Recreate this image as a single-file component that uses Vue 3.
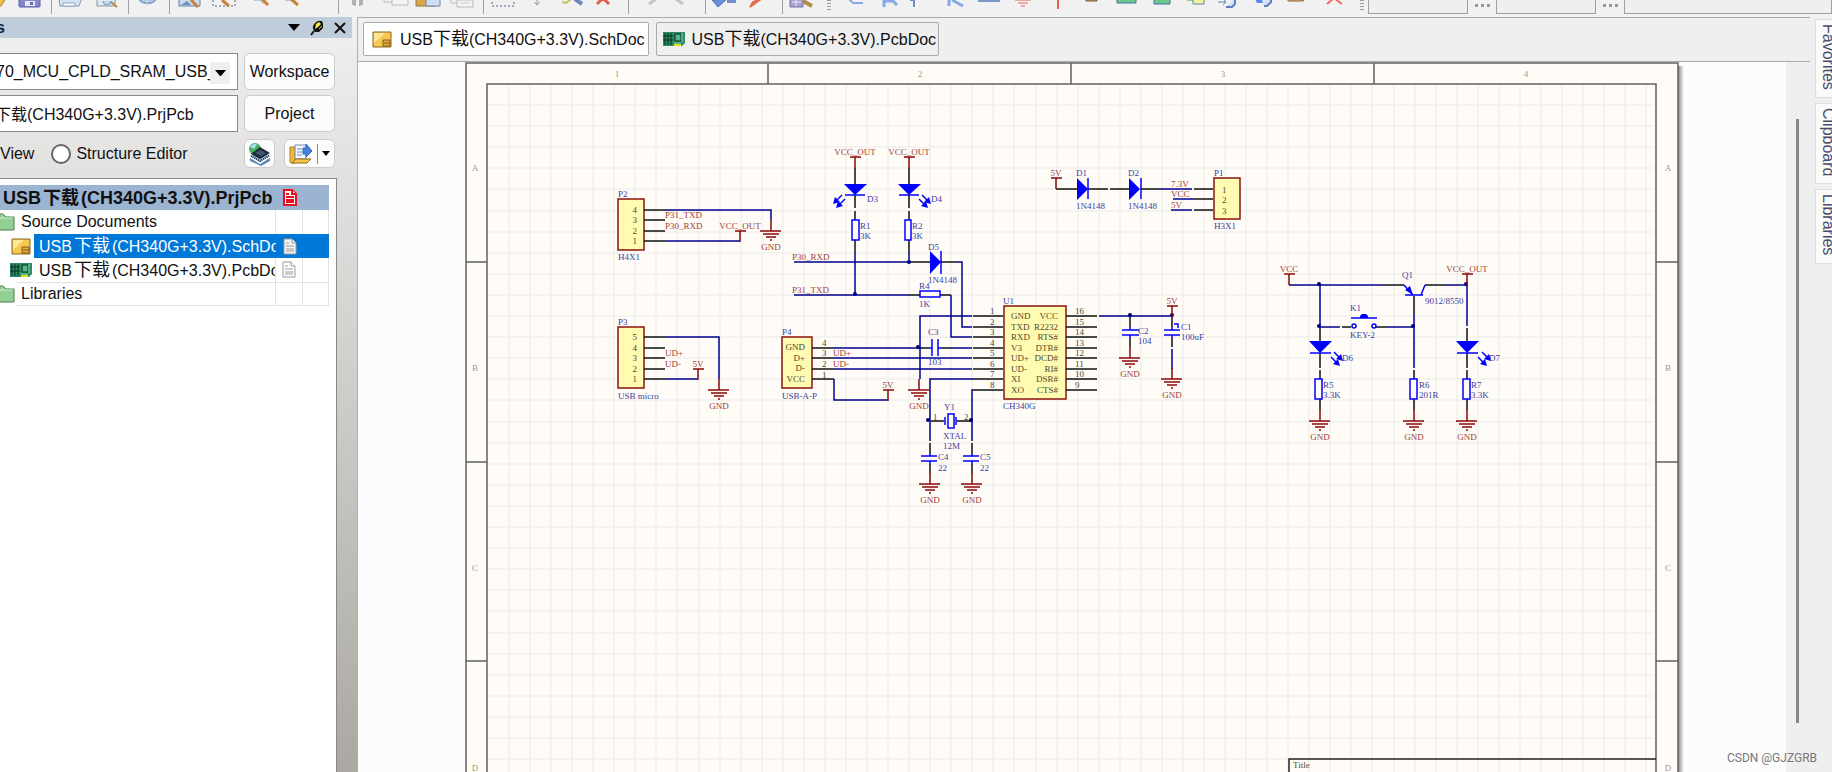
<script setup>
import { ref } from 'vue'

const workspace = ref('70_MCU_CPLD_SRAM_USB_')
const project = ref('下载(CH340G+3.3V).PrjPcb')
const view = ref('')

/* Toolbar: [start, type, shapes]; a slot reaches to the start of the next one. */
const slots = [
  [0, 'tool', 'Open', [['M-4 6H1L6-2H-2z', '#f0c050', '#b08020']]],
  [14, 'tool', 'Save', [['M19-2H40V6Q40 7 39 7H20Q19 7 19 6z', '#8486cc', '#5a5ca8'], ['M25 1H35V6H25z', '#e6e6f4', ''], ['M30 2H33V5H30z', '#6a6ab0', '']]],
  [51, 'sep'],
  [53, 'tool', 'Print', [['M59-2H82L79 6H60z', '#d6e4f2', '#7c98b8'], ['M63 3H75V6H63z', '#fff', '#8aa4c0']]],
  [92, 'tool', 'Preview', [['M97-2H115V6H97z', '#dfe9f2', '#8296aa'], ['M103 1a4 4 0 1 0 8 0', '#c0d8ea', '#8098b0'], ['M111 2L117 7', '', '#c08040', 2]]],
  [128, 'sep'],
  [130, 'tool', 'Browser', [['M138-2A10 8 0 0 0 157-2z', '#8caed6', '#6a8ab4'], ['M142 1H153M147-2V6', '', '#d5e4f4']]],
  [169, 'sep'],
  [171, 'tool', 'Fit document', [['M179-2H200V6H179z', '#c8dcee', '#5c80a8'], ['M181 5L187 1L191 5z', '#6c8fb8', ''], ['M191 0L198 7', '', '#c8803c', 3]]],
  [208, 'tool', 'Fit area', [['M213 0V6H235V0', '', '#50688c', 1, '2 2'], ['M222 0L229 6', '', '#c8803c', 3]]],
  [246, 'tool', 'Zoom in', [['M254 0H260L264 3', '', '#b8c8d8', 2], ['M262-1L268 5', '', '#c8803c', 3]]],
  [280, 'tool', 'Zoom out', [['M285 0H291L294 2', '', '#b8c8d8', 2], ['M291-1L298 5', '', '#c8803c', 3]]],
  [338, 'sep'],
  [340, 'tool', 'Cut', [['M353 0V5M362 0V5M355 0V6M360 0V6', '', '#b0b0b0', 2]]],
  [376, 'tool', 'Copy', [['M384-2H396V2H384z', '#f2f2f2', '#bbb'], ['M392-2H408V5H392z', '#f2f2f2', '#bbb']]],
  [411, 'tool', 'Paste', [['M416-2H436V6H416z', '#d8a850', '#9a7430'], ['M426-1H440V6H426z', '#cfe0f2', '#6c88a8']]],
  [445, 'tool', 'Stamp', [['M451-2H466V3H451z', '#f2f2f2', '#bbb'], ['M457 0H473V7H457z', '#f2f2f2', '#bbb'], ['M460 3H470', '', '#ccc']]],
  [483, 'sep'],
  [485, 'tool', 'Select', [['M492-2V6H514V-2', '', '#50688c', 1, '2 2']]],
  [524, 'tool', 'Move', [['M537-2V4M534 2L537 5L540 2', '', '#999']]],
  [554, 'tool', 'Deselect', [['M562 2L566 3L571-1', '', '#c8c060', 2], ['M575-1L582 4', '', '#6c88b8', 4]]],
  [592, 'tool', 'Clear filter', [['M597 4L603-2L609 4', '', '#e0604c', 3]]],
  [628, 'sep'],
  [630, 'tool', 'Undo', [['M649 4L656-1', '', '#c4c4c4', 3]]],
  [667, 'tool', 'Redo', [['M676-1L683 4', '', '#c4c4c4', 3]]],
  [705, 'sep'],
  [707, 'tool', 'Cross probe', [['M712 0L718 7L727-1z', '#6890d8', '#4a70b8'], ['M727-2H736V3H727z', '#7090c8', '']]],
  [742, 'tool', 'Edit', [['M750 7L753 2L761-1z', '#e07050', '#e07050', 2]]],
  [782, 'sep'],
  [784, 'tool', 'Inspect', [['M790-2H803V7H790z', '#a8a0d8', '#7870a8'], ['M792 2H801M796-1V6', '', '#eee'], ['M803 1L812 6', '', '#b08c48', 4]]],
  [826, 'grip'],
  [834, 'tool', 'Wire', [['M849-1L853 3H863', '', '#86a8e8', 2]]],
  [876, 'tool', 'Bus', [['M884-2V7M885 1H893L897 5', '', '#86a8e8', 3]]],
  [904, 'tool', 'Harness', [['M910 0H914V7', '', '#6a90c0', 2]]],
  [936, 'tool', 'Bus entry', [['M949-1V6M952 0L963 6', '', '#86a8e8', 3]]],
  [972, 'tool', 'Net label', [['M978 1H1000', '', '#7c98c8', 2]]],
  [1008, 'tool', 'GND port', [['M1015 0H1031M1018 3H1028M1021 6H1025', '', '#e8604c', 1]]],
  [1044, 'tool', 'VCC port', [['M1058-2V9', '', '#e8604c', 2]]],
  [1076, 'tool', 'Part', [['M1086-2H1097V1H1086z', '#b89458', '#786038']]],
  [1108, 'tool', 'Sheet', [['M1117-2H1136V3H1117z', '#6cc888', '#4470a8']]],
  [1146, 'tool', 'Sheet entry', [['M1154-2H1170V4H1154z', '#6cc888', '#4470a8'], ['M1160-1H1167', '', '#4470a8', 2]]],
  [1180, 'tool', 'Device sheet', [['M1187-2H1196V1H1187z', '#90d080', ''], ['M1193-2H1204V4H1193z', '#f2f4a0', '#5c88a8']]],
  [1212, 'tool', 'Harness connector', [['M1218 2H1226M1223-1L1226 2L1223 5', '', '#5c88b8'], ['M1226 7H1232L1235 4V-2', '#d4e2f8', '#5c80c0', 2]]],
  [1246, 'tool', 'Harness entry', [['M1255-1H1263V3H1257z', '#5888e8', ''], ['M1261-2H1271V2L1267 6H1264', '#d4e2f8', '#5c80c0', 2]]],
  [1280, 'tool', 'Port', [['M1288-2H1306L1303 1H1288z', '#d8b070', '#886838']]],
  [1316, 'tool', 'No ERC', [['M1327 4L1334-2L1342 4', '', '#f06c5c', 2]]],
  [1359, 'grip'],
  [1368, 'end'],
]
const tools = slots.slice(0, -1).map((s, i) => ({ x: s[0], w: slots[i + 1][0] - s[0], type: s[1], name: s[2], shapes: s[3] }))

const rows = Array.from({ length: 32 }, (_, i) => Math.round(105 + i * 21.1))
const cols = Array.from({ length: 55 }, (_, i) => Math.round(509 + i * 21.06))

const black = `M644 210H665M644 220H665M644 231H665M644 241H665
M644 337H665M644 348H665M644 358H665M644 369H665M644 379H665
M812 348H834M812 358H834M812 369H834M812 379H834
M855 168V184M855 195V208M855 211V220M855 240V252
M909 168V184M909 195V208M909 211V220M909 240V252
M908 262H930M941 262H955M910 295H920M940 295H951M920 348H929M941 348H951
M973 316H1003M973 327H1003M973 337H1003M973 348H1003M973 358H1003M973 369H1003M973 379H1003M973 390H1003
M1066 316H1097M1066 327H1097M1066 337H1097M1066 348H1097M1066 358H1097M1066 369H1097M1066 379H1097M1066 390H1097
M1130 317V327M1130 338V347M1172 317V327M1172 338V347
M931 421H944M957 421H971M930 443V453M930 464V473M972 443V453M972 464V473
M1056 189H1077M1088 189H1108M1110 189H1129M1141 189H1160M1194 189H1213M1193 199H1213M1194 210H1213
M1384 285H1404M1425 285H1446M1320 327V341M1320 353V368M1320 370V379M1320 399V410
M1467 328V341M1467 353V368M1467 370V379M1467 399V410M1414 296V314M1414 370V379M1414 399V410
M1342 327H1351M1376 327H1387`
const wires = `M665 210H771V220M665 241H740M665 337H719V379M665 379H698
M834 348H920M834 358H972M834 369H972M834 379V400H888
M855 252V295M909 252V262M794 262H908M794 295H910M955 262H962V327H972M951 295V337H972M951 348H972
M972 316H920V379M973 379H930V441M973 390H972V441M1099 316H1172M1172 349V369
M1160 189H1192M1173 199H1193M1171 210H1192
M1289 285H1384M1446 285H1467V326M1320 285V327H1340M1387 327H1414M1414 314V368`
const symbols = `M845 195H865M899 195H919M941 251V274M1088 178V199M1141 178V199
M1310 353H1331M1457 353H1478
M932 339V356M938 339V356M929 348H932M938 348H941
M1122 330H1139M1122 335H1139M1130 327V330M1130 335V338
M1164 330H1180M1164 335H1180M1172 327V330M1172 335V338M1174 324H1178V328
M921 456H937M921 461H937M930 453V456M930 461V464
M963 456H979M963 461H979M972 453V456M972 461V464
M945 417V425M956 417V425M1351 318H1377M1405 295H1423M1404 285L1413 295M1421 295L1425 285`
const solids = `M844 184H867L855 195zM898 184H921L909 195zM930 251V274L941 262z
M1077 178V200L1088 189zM1129 178V200L1140 189zM1309 341H1332L1320 353zM1456 341H1479L1467 353z
M1360 318V316L1362 314H1366L1368 316V318zM1413 295L1405 290L1410 286z`
const resistors = [[852, 220, 7, 20], [905, 220, 6, 20], [920, 291, 20, 6], [948, 414, 6, 14], [1315, 379, 7, 20], [1410, 379, 7, 20], [1463, 379, 7, 20]]
const arrows = [[842, 195, -1], [845, 199, -1], [922, 195, 1], [919, 199, 1], [1334, 352, 1], [1331, 357, 1], [1482, 352, 1], [1478, 357, 1]]
const boxes = [[618, 199, 26, 51], [618, 327, 26, 61], [782, 337, 30, 51], [1004, 306, 62, 93], [1214, 178, 26, 41]]
const dots = [[855, 294], [909, 262], [918, 347], [928, 420], [971, 420], [1130, 315], [1172, 315], [1319, 284], [1319, 326], [1413, 326], [1466, 284]]
/* [x, y of the first bar] */
const grounds = [[771, 231], [719, 390], [919, 390], [1130, 358], [1172, 379], [930, 484], [972, 484], [1320, 421], [1414, 421], [1467, 421]]
const supplies = [['VCC_OUT', 740, 231], ['5V', 698, 369], ['5V', 888, 390], ['VCC_OUT', 855, 157], ['VCC_OUT', 909, 157], ['5V', 1172, 306], ['5V', 1056, 178], ['VCC', 1289, 274], ['VCC_OUT', 1467, 274]]
const parts = [
  ['P2', 618, 194], ['H4X1', 618, 257], ['P3', 618, 322], ['USB micro', 618, 396], ['P4', 782, 332], ['USB-A-P', 782, 396],
  ['D3', 867, 199], ['R1', 860, 226], ['3K', 860, 236], ['D4', 931, 199], ['R2', 912, 226], ['3K', 912, 236],
  ['D5', 928, 247], ['1N4148', 928, 280], ['R4', 919, 286], ['1K', 919, 304], ['C3', 928, 332], ['103', 928, 362],
  ['U1', 1003, 301], ['CH340G', 1003, 406], ['C2', 1138, 331], ['104', 1138, 341], ['C1', 1181, 327], ['100uF', 1181, 337],
  ['Y1', 944, 407], ['XTAL', 943, 436], ['12M', 943, 446], ['C4', 938, 457], ['22', 938, 468], ['C5', 980, 457], ['22', 980, 468],
  ['D1', 1076, 173], ['1N4148', 1076, 206], ['D2', 1128, 173], ['1N4148', 1128, 206], ['P1', 1214, 173], ['H3X1', 1214, 226],
  ['Q1', 1402, 275], ['9012/8550', 1425, 301], ['K1', 1350, 308], ['KEY-2', 1350, 335], ['D6', 1342, 358], ['D7', 1489, 358],
  ['R5', 1323, 385], ['3.3K', 1323, 395], ['R6', 1419, 385], ['201R', 1419, 395], ['R7', 1471, 385], ['3.3K', 1471, 395],
]
const nets = [
  ['P31_TXD', 665, 215], ['P30_RXD', 665, 226], ['UD+', 665, 353], ['UD-', 665, 364], ['UD+', 833, 353], ['UD-', 833, 364],
  ['P30_RXD', 792, 257], ['P31_TXD', 792, 290], ['7.3V', 1171, 184], ['VCC', 1171, 194], ['5V', 1171, 205],
]
const yPins = [316, 327, 337, 348, 358, 369, 379, 390]
const pins = [
  ...[4, 3, 2, 1].map((n, i) => [n, 637, [210, 220, 231, 241][i], 'end']),
  ...[5, 4, 3, 2, 1].map((n, i) => [n, 637, [337, 348, 358, 369, 379][i], 'end']),
  ...['GND', 'D+', 'D-', 'VCC'].map((n, i) => [n, 805, [347, 358, 368, 379][i], 'end']),
  ...[4, 3, 2, 1].map((n, i) => [n, 822, [343, 353, 364, 375][i], 'start']),
  ...['GND', 'TXD', 'RXD', 'V3', 'UD+', 'UD-', 'XI', 'XO'].map((n, i) => [n, 1011, yPins[i], 'start']),
  ...['VCC', 'R2232', 'RTS#', 'DTR#', 'DCD#', 'RI#', 'DSR#', 'CTS#'].map((n, i) => [n, 1058, yPins[i], 'end']),
  ...yPins.map((y, i) => [i + 1, 990, y - 5, 'start']),
  ...yPins.map((y, i) => [16 - i, 1075, y - 5, 'start']),
  [1, 1222, 190, 'start'], [2, 1222, 200, 'start'], [3, 1222, 211, 'start'], [1, 933, 417, 'start'], [2, 964, 417, 'start'],
]
</script>

<template>
  <div class="app">
    <header class="toolbar">
      <template v-for="t in tools" :key="t.x">
        <button v-if="t.type === 'tool'" class="tool" :aria-label="t.name" :style="{ width: t.w + 'px' }">
          <svg :width="t.w" height="14" :viewBox="`${t.x} 0 ${t.w} 14`">
            <path v-for="(p, i) in t.shapes" :key="i" :d="p[0]" :fill="p[1] || 'none'" :stroke="p[2] || 'none'" :stroke-width="p[3] || 1" :stroke-dasharray="p[4]" />
          </svg>
        </button>
        <span v-else :class="t.type" :style="{ width: t.w + 'px' }"></span>
      </template>
      <input class="field" aria-label="Filter" />
      <button class="more" aria-label="Choose filter"><i></i><i></i><i></i></button>
      <input class="field" aria-label="Mask" />
      <button class="more" aria-label="Choose mask"><i></i><i></i><i></i></button>
      <input class="field wide" aria-label="Location" />
    </header>

    <div class="body">
      <aside class="panel">
        <div class="title">
          <b>s</b>
          <button aria-label="Menu"><svg width="12" height="7" viewBox="0 0 12 7"><path d="M0 0H12L6 7z" /></svg></button>
          <button aria-label="Pin">
            <svg width="14" height="16" viewBox="0 0 14 16">
              <path d="M5 3L8 1H12L13 4V8L9 12H5L3 9V6z" fill="#111" /><path d="M6 4L9 2L11 4L8 7L5 9z" fill="#f4ec50" /><path d="M9 9L12 6" stroke="#d8d050" /><path d="M4 11L1 15" stroke="#111" stroke-width="2" />
            </svg>
          </button>
          <button aria-label="Close"><svg width="12" height="12" viewBox="0 0 12 12"><path d="M1 1L11 11M11 1L1 11" stroke="#111" stroke-width="2" /></svg></button>
        </div>

        <div class="controls">
          <div class="combo">
            <select v-model="workspace" aria-label="Workspace"><option>70_MCU_CPLD_SRAM_USB_</option></select>
            <span class="drop"><svg width="11" height="6" viewBox="0 0 11 6"><path d="M0 0H11L6 6H5z" /></svg></span>
          </div>
          <button class="btn">Workspace</button>
          <input v-model="project" class="box" aria-label="Project" />
          <button class="btn">Project</button>
        </div>

        <div class="modes">
          <span>View</span>
          <label><input v-model="view" type="radio" value="structure" /> Structure Editor</label>
          <button class="btn small" aria-label="Compile">
            <svg width="24" height="24" viewBox="0 0 24 24">
              <path d="M2 16L12 22L22 16V19L13 24L2 19z" fill="#5c88b8" /><path d="M2 14L12 20L22 14L13 9z" fill="#a8c8e8" />
              <circle cx="7" cy="7" r="6" fill="#48b060" /><path d="M2 5Q5 1 9 2L6 7z" fill="#a8e0f0" />
              <path d="M3 12L12 17L22 11L12 5z" fill="#1c2c3c" /><path d="M7 11L13 14L18 11L12 8z" fill="#44586c" />
              <path d="M3 14L12 19L22 13" fill="none" stroke="#182838" stroke-dasharray="1 1" stroke-width="2" />
            </svg>
          </button>
          <button class="btn split" aria-label="Open documents">
            <svg width="24" height="24" viewBox="0 0 24 24">
              <path d="M1 5H5L6 8V21H2L1 20z" fill="#f0b838" stroke="#b08020" /><path d="M6 3H17V17H6z" fill="#f6faff" stroke="#7088b0" />
              <path d="M8 7H13M8 10H13M8 13H13" stroke="#6888c8" /><path d="M14 6H17V2L23 9L17 15V12H14z" fill="#4880e0" stroke="#3464b8" />
              <path d="M3 21L7 17H22L18 21z" fill="#f8c848" stroke="#906818" />
            </svg>
            <i></i>
            <svg width="8" height="5" viewBox="0 0 8 5"><path d="M0 0H8L4 5z" /></svg>
          </button>
        </div>

        <ul class="tree">
          <li class="row root">
            <span class="name">USB<span class="cjk">下载</span>(CH340G+3.3V).PrjPcb</span>
            <svg class="page red" width="14" height="17" viewBox="0 0 14 17"><path d="M1 1H9L13 5V16H1z" /><path d="M9 1V5H13M3 5H6M3 8H11M3 11H11M3 13H11" /></svg>
          </li>
          <li class="row">
            <svg class="folder" width="15" height="18" viewBox="0 0 15 18"><path d="M-3 17V1H3L6 4H14V17z" fill="#94cf94" stroke="#4c7c50" /><path d="M0 5H13" stroke="#d0f0d0" /></svg>
            <span class="name">Source Documents</span><span class="cell"></span><span class="cell"></span>
          </li>
          <li class="row file selected">
            <svg width="20" height="17" viewBox="0 0 20 17"><path d="M1 1H19V16H1z" fill="#f6c850" stroke="#8a6420" /><path d="M2 2H13L2 12z" fill="#fbe795" /><path d="M11 9H18V15H11z" fill="#e8b040" stroke="#7c5818" /><path d="M12 12H18" stroke="#7c5818" /></svg>
            <span class="name">USB<span class="cjk">下载</span>(CH340G+3.3V).SchDoc</span>
            <svg class="page" width="14" height="17" viewBox="0 0 14 17"><path d="M1 1H9L13 5V16H1z" /><path d="M9 1V5H13M3 5H6M3 8H11M3 11H11M3 13H11" /></svg>
          </li>
          <li class="row file">
            <svg width="22" height="17" viewBox="0 0 22 17"><path d="M0 1H22V12L19 15H0z" fill="#2c8c64" /><path d="M2 2V14M5 2V14M8 2V14M0 5H10M0 9H10" stroke="#083020" /><path d="M12 3H18V10H12z" fill="#58b48c" stroke="#082c20" /><path d="M19 2V11M11 12H18" stroke="#8cd8a8" /><path d="M11 14H18" stroke="#d8e020" stroke-width="2" /></svg>
            <span class="name">USB<span class="cjk">下载</span>(CH340G+3.3V).PcbDoc</span><span class="cell shift"><svg class="page" width="14" height="17" viewBox="0 0 14 17"><path d="M1 1H9L13 5V16H1z" /><path d="M9 1V5H13M3 5H6M3 8H11M3 11H11M3 13H11" /></svg></span><span class="cell"></span>
          </li>
          <li class="row lined">
            <svg class="folder" width="15" height="18" viewBox="0 0 15 18"><path d="M-3 17V1H3L6 4H14V17z" fill="#94cf94" stroke="#4c7c50" /><path d="M0 5H13" stroke="#d0f0d0" /></svg>
            <span class="name">Libraries</span><span class="cell"></span><span class="cell"></span>
          </li>
        </ul>
      </aside>

      <main class="docs">
        <nav class="tabs">
          <button class="tab active">
            <svg width="20" height="17" viewBox="0 0 20 17"><path d="M1 1H19V16H1z" fill="#f6c850" stroke="#8a6420" /><path d="M2 2H13L2 12z" fill="#fbe795" /><path d="M11 9H18V15H11z" fill="#e8b040" stroke="#7c5818" /><path d="M12 12H18" stroke="#7c5818" /></svg>
            <span>USB<span class="cjk">下载</span>(CH340G+3.3V).SchDoc</span>
          </button>
          <button class="tab">
            <svg width="22" height="17" viewBox="0 0 22 17"><path d="M0 1H22V12L19 15H0z" fill="#2c8c64" /><path d="M2 2V14M5 2V14M8 2V14M0 5H10M0 9H10" stroke="#083020" /><path d="M12 3H18V10H12z" fill="#58b48c" stroke="#082c20" /><path d="M19 2V11M11 12H18" stroke="#8cd8a8" /><path d="M11 14H18" stroke="#d8e020" stroke-width="2" /></svg>
            <span>USB<span class="cjk">下载</span>(CH340G+3.3V).PcbDoc</span>
          </button>
        </nav>
        <div class="view">
          <div class="canvas">
            <svg class="sheet" width="1428" height="710" viewBox="358 62 1428 710">
              <defs>
                <linearGradient id="fade"><stop offset="0" stop-color="#888" /><stop offset="1" stop-color="#fcfcfc" /></linearGradient>
                <g id="gnd"><path d="M0-11V0M-11 0H10M-8 3H8M-5 6H5M-1 9H1" /></g>
              </defs>
              <rect x="1678" y="66" width="6" height="710" fill="url(#fade)" />
              <rect x="466" y="63" width="1212" height="720" fill="#fffcf7" />
              <g class="grid">
                <path v-for="y in rows" :key="'r' + y" :d="`M487 ${y}H1653`" />
                <path v-for="x in cols" :key="'c' + x" :d="`M${x} 84V772`" />
              </g>
              <g class="frame">
                <path d="M466 790V63H1678V790M487 790V84H1656V790M768 63V84M1071 63V84M1374 63V84M466 262H487M466 462H487M466 661H487M1656 262H1678M1656 462H1678M1656 661H1678" />
              </g>
              <g class="zone">
                <text v-for="n in 4" :key="n" :x="314 + n * 303" y="77">{{ n }}</text>
                <template v-for="(c, i) in 'ABCD'" :key="c">
                  <text x="475" :y="171 + i * 200">{{ c }}</text><text x="1668" :y="171 + i * 200">{{ c }}</text>
                </template>
              </g>
              <path d="M1289 790V759H1656" class="block" />
              <text x="1293" y="768" class="pin">Title</text>

              <rect v-for="(b, i) in boxes" :key="'b' + i" class="chip" :x="b[0]" :y="b[1]" :width="b[2]" :height="b[3]" />
              <path :d="black" class="lead" />
              <path :d="wires" class="wire" />
              <path :d="symbols" class="symbol" />
              <path :d="solids" class="solid" />
              <rect v-for="(r, i) in resistors" :key="'z' + i" class="resistor" :x="r[0]" :y="r[1]" :width="r[2]" :height="r[3]" />
              <circle cx="1354" cy="326" r="2" class="resistor" /><circle cx="1374" cy="326" r="2" class="resistor" />
              <g v-for="(a, i) in arrows" :key="'a' + i" :transform="`translate(${a[0]} ${a[1]}) scale(${a[2]} 1)`">
                <path d="M0 0L6 6" class="symbol" /><path d="M9 9L2 7L7 2z" class="solid" />
              </g>
              <circle v-for="(d, i) in dots" :key="'d' + i" :cx="d[0]" :cy="d[1]" r="2" fill="#000080" />
              <g v-for="(g, i) in grounds" :key="'g' + i">
                <use href="#gnd" class="power" :x="g[0]" :y="g[1]" />
                <text class="net mid" :x="g[0]" :y="g[1] + 19">GND</text>
              </g>
              <g v-for="(s, i) in supplies" :key="'s' + i">
                <path class="power" :d="`M${s[1] - 5} ${s[2]}h11M${s[1]} ${s[2]}v11`" />
                <text class="net mid" :x="s[1]" :y="s[2] - 2">{{ s[0] }}</text>
              </g>
              <text v-for="(t, i) in nets" :key="'n' + i" class="net" :x="t[1]" :y="t[2] + 3">{{ t[0] }}</text>
              <text v-for="(t, i) in parts" :key="'p' + i" class="part" :x="t[1]" :y="t[2] + 3">{{ t[0] }}</text>
              <text v-for="(t, i) in pins" :key="'i' + i" class="pin" :x="t[1]" :y="t[2] + 3" :text-anchor="t[3]">{{ t[0] }}</text>
            </svg>
          </div>
          <div class="scroll"><i></i></div>
        </div>
      </main>

      <nav class="side">
        <button>Favorites</button>
        <button>Clipboard</button>
        <button>Libraries</button>
      </nav>
    </div>
    <div class="mark">CSDN @GJZGRB</div>
  </div>
</template>

<style>
body { margin: 0; }
</style>

<style scoped>
* { box-sizing: border-box; }
.app { position: relative; display: flex; flex-direction: column; height: 100vh; overflow: hidden; background: #efefef; color: #111; font: 16px/20px "Liberation Sans", "Noto Sans CJK SC", sans-serif; }
button, input, select { margin: 0; padding: 0; border: 0; background: none; color: inherit; font: inherit; }
svg { display: block; flex: none; }
.cjk { font-size: 18px; }

.toolbar { display: flex; flex: none; height: 17px; overflow: hidden; background: #f1f1f1; }
.tool { flex: none; height: 14px; }
.sep { flex: none; height: 14px; border-left: 1px solid #a0a0a0; }
.grip { flex: none; height: 11px; background: repeating-linear-gradient(#999 0 1px, #f1f1f1 1px 3px) 1px 0 / 4px 11px no-repeat; }
.field { flex: none; width: 100px; height: 24px; margin-top: -10px; border: 1px solid #a0a0a0; background: #efefef; }
.field.wide { flex: 1; min-width: 0; }
.more { display: flex; flex: none; width: 28px; padding: 4px 0 0 7px; gap: 3px; align-items: flex-start; }
.more i { width: 3px; height: 3px; background: #999; }

.body { display: flex; flex: 1; min-height: 0; }
.panel { display: flex; flex: none; flex-direction: column; width: 358px; border-right: 1px solid #b0b0b0; background: linear-gradient(#f0f0f0, #dcdbd9 30%, #aaa8a0); }
.title { display: flex; align-items: center; gap: 10px; height: 21px; margin-right: 5px; padding-right: 6px; background: #bfcddb; }
.title b { margin-right: auto; margin-left: -4px; color: #0c2444; }
.controls { display: grid; grid-template-columns: 1fr 91px; gap: 5px 6px; margin: 15px 22px 0 -2px; }
.combo, .box { height: 37px; border: 1px solid #888; background: #fff; }
.combo { position: relative; display: flex; }
.combo select { width: 100%; padding-left: 0; appearance: none; text-indent: -3px; }
.drop { position: absolute; top: 8px; right: 7px; display: grid; place-items: center; width: 20px; height: 22px; background: #efefef; }
.box { min-width: 0; padding-bottom: 2px; text-indent: -4px; }
.btn { height: 37px; border: 1px solid #ccc; border-radius: 6px; background: #fcfcfc; }
.modes { display: flex; align-items: center; height: 29px; margin: 7px 22px 0 0; }
.modes label { display: flex; align-items: center; gap: 5px; margin: 0 auto 0 17px; }
.modes input { width: 20px; height: 20px; border: 2px solid #666; border-radius: 10px; background: #fff; appearance: none; }
.small, .split { display: flex; align-items: center; justify-content: center; height: 29px; }
.small { width: 31px; }
.split { gap: 4px; width: 51px; margin-left: 9px; }
.split i { width: 1px; height: 20px; background: #888; }

.tree { flex: 1; margin: 10px 20px 0 0; padding: 6px 7px 0 0; border: solid #888; border-width: 1px 1px 0 0; background: #fff; list-style: none; }
.row { display: flex; align-items: center; height: 24px; }
.name { flex: 1; overflow: hidden; white-space: nowrap; }
.cell { flex: none; width: 26px; height: 24px; border-right: 1px solid #e2e2e2; }
.name + .cell { width: 28px; border-left: 1px solid #e2e2e2; }
.row > .name + .page { margin: 0 32px 0 7px; }
.folder { margin-right: 6px; }
.root { height: 25px; padding-left: 3px; background: #9bb4d2; font-size: 18px; font-weight: 700; }
.root .cjk { padding: 0 2px; }
.file { padding-left: 10px; }
.file > svg:first-child { width: 22px; }
.file .name { padding: 2px 0 2px 7px; line-height: 20px; }
.file .cjk { padding: 0 2px; }
.selected { background: linear-gradient(#0078d7, #0078d7) 34px 0 no-repeat; color: #fff; }
.lined { background: linear-gradient(#e2e2e2, #e2e2e2) 16px 0 / 100% 1px no-repeat, linear-gradient(#e2e2e2, #e2e2e2) 16px 23px / 100% 1px no-repeat; }
.shift { padding: 3px 0 0 6px; }
.page path { fill: #fff; stroke: #999; }
.selected .page path { fill: #f4f4f4; }
.page.red path { fill: #fff; stroke: #e81020; stroke-width: 2; }

.docs { display: flex; flex: 1; flex-direction: column; min-width: 0; border-top: 1px solid #aaa; }
.tabs { display: flex; flex: none; gap: 7px; height: 44px; padding: 4px 5px; border-bottom: 1px solid #aaa; background: #efefef; }
.tab { display: flex; align-items: center; gap: 8px; height: 34px; padding: 0 3px 0 8px; border: 1px solid #aaa; border-radius: 2px; white-space: nowrap; }
.tab.active { background: #fff; }
.tab + .tab { gap: 7px; padding: 0 2px 0 6px; }
.view { display: flex; flex: 1; min-height: 0; }
.canvas { display: flex; flex: 1; justify-content: center; min-width: 0; overflow: hidden; background: #fcfcfc; }
.scroll { width: 24px; padding: 57px 0 49px 10px; }
.scroll i { display: block; width: 3px; height: 100%; background: #868686; }
.side { display: flex; flex: none; flex-direction: column; gap: 5px; width: 22px; padding: 2px 0 0 5px; overflow: hidden; }
.side button { width: 28px; padding: 4px 4px 7px 5px; border: 1px solid #ddd; background: #fafafa; color: #4c4c66; text-align: left; writing-mode: vertical-rl; }
.mark { position: absolute; right: 15px; bottom: 4px; color: #777; font: 12px/20px Roboto, sans-serif; }

.sheet text { font: 9px "Liberation Serif", serif; }
.grid path { stroke: #f1f1ed; stroke-width: 1.6; }
.frame path { fill: none; stroke: #606060; stroke-width: 1.5; }
.zone text { fill: #a09890; text-anchor: middle; }
.block { fill: none; stroke: #222; stroke-width: 1.5; }
.chip { fill: #fffbb0; stroke: #8c1010; stroke-width: 1.5; }
.lead, .wire, .symbol, .power { fill: none; stroke-width: 1.5; }
.lead { stroke: #111; }
.wire { stroke: #000090; }
.symbol { stroke: #0000ff; }
.power { stroke: #8c0808; }
.solid { fill: #0000ff; }
.resistor { fill: #fffcf7; stroke: #0000ff; stroke-width: 1.5; }
.sheet .net { fill: #a04038; }
.sheet .part { fill: #4040a0; }
.sheet .pin { fill: #504830; }
.sheet .mid { text-anchor: middle; }
</style>
